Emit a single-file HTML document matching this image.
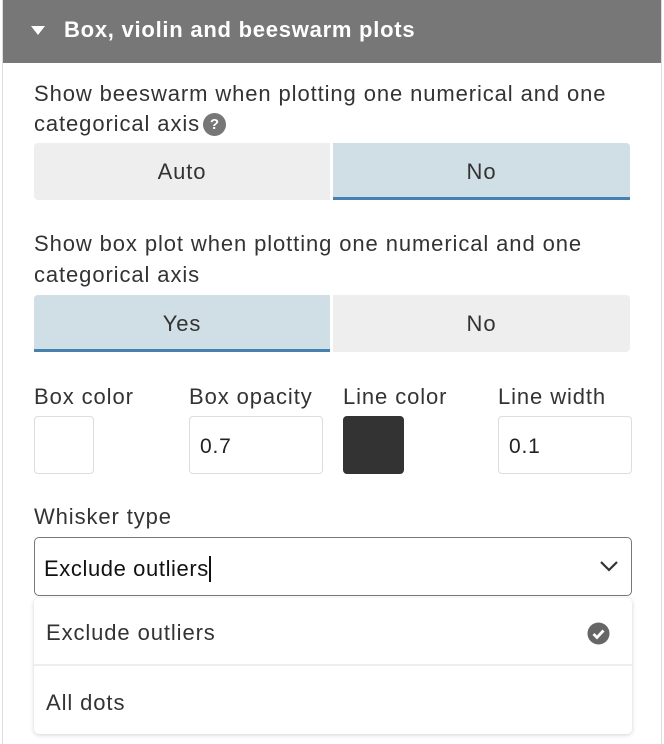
<!DOCTYPE html>
<html><head><style>
*{margin:0;padding:0;box-sizing:border-box}
body{width:664px;height:744px;background:#fff;font-family:"Liberation Sans",sans-serif;color:#333;position:relative;overflow:hidden}
.a{position:absolute;white-space:nowrap}
.t{font-size:22px;letter-spacing:0.9px}
.seg{position:absolute;height:57px;display:flex;align-items:center;justify-content:center;font-size:22px;letter-spacing:0.9px;color:#333}
.off{background:#eeeeee}
.on{background:#d0dee5;border-bottom:3px solid #4682ad;padding-top:3px}
.box{position:absolute;top:416px;height:58px;border:1px solid #ddd;border-radius:4px;background:#fff;font-size:21px;letter-spacing:0.8px;color:#222;padding-left:10px;padding-top:4px;display:flex;align-items:center}
</style></head><body>
<div class="a" style="left:2px;top:0;width:1px;height:744px;background:#ddd"></div>
<div class="a" style="left:661px;top:0;width:1px;height:744px;background:#ddd"></div>
<div class="a" style="left:3px;top:0;width:658px;height:63px;background:#777"></div>
<svg class="a" style="left:31px;top:26px" width="14" height="10"><path d="M0 0 L14 0 L7 9 Z" fill="#fff"/></svg>
<div class="a" style="left:64px;top:17px;font-size:22px;font-weight:bold;color:#fff;letter-spacing:0.75px">Box, violin and beeswarm plots</div>

<div class="a t" style="left:34px;top:81px">Show beeswarm when plotting one numerical and one</div>
<div class="a t" style="left:34px;top:111px">categorical axis</div>
<div class="a" style="left:203px;top:113px;width:23px;height:23px;border-radius:50%;background:#777;color:#fff;font-size:15px;font-weight:bold;text-align:center;line-height:23px">?</div>
<div class="seg off" style="left:34px;top:143px;width:296px;border-radius:4px 0 0 4px">Auto</div>
<div class="seg on" style="left:333px;top:143px;width:297px;border-radius:0 4px 0 0">No</div>

<div class="a t" style="left:34px;top:231px">Show box plot when plotting one numerical and one</div>
<div class="a t" style="left:34px;top:262px">categorical axis</div>
<div class="seg on" style="left:34px;top:295px;width:296px;border-radius:4px 0 0 0">Yes</div>
<div class="seg off" style="left:333px;top:295px;width:297px;border-radius:0 4px 4px 0">No</div>

<div class="a t" style="left:34px;top:384px">Box color</div>
<div class="a t" style="left:189px;top:384px">Box opacity</div>
<div class="a t" style="left:343px;top:384px">Line color</div>
<div class="a t" style="left:498px;top:384px">Line width</div>
<div class="box" style="left:34px;width:60px"></div>
<div class="box" style="left:189px;width:134px">0.7</div>
<div class="box" style="left:343px;width:61px;background:#333;border-color:#333"></div>
<div class="box" style="left:498px;width:134px">0.1</div>

<div class="a t" style="left:34px;top:504px">Whisker type</div>
<div class="a" style="left:34px;top:537px;width:598px;height:59px;border:1.5px solid #777;border-radius:5px"></div>
<div class="a" style="left:44px;top:556px;font-size:22px;color:#111;letter-spacing:0.6px">Exclude outliers<span style="display:inline-block;width:2px;height:26px;background:#111;vertical-align:-6px"></span></div>
<svg class="a" style="left:599px;top:560px" width="20" height="14"><path d="M2 2 L10 10 L18 2" fill="none" stroke="#333" stroke-width="2.2"/></svg>

<div class="a" style="left:34px;top:598px;width:598px;height:136px;background:#fff;border-radius:5px;box-shadow:0 1px 5px rgba(0,0,0,0.18)"></div>
<div class="a" style="left:34px;top:664px;width:598px;height:2px;background:#eee"></div>
<div class="a t" style="left:46px;top:620px;color:#333">Exclude outliers</div>
<div class="a t" style="left:46px;top:690px;color:#333">All dots</div>
<svg class="a" style="left:587px;top:622px" width="23" height="23"><circle cx="11.5" cy="11.5" r="11" fill="#666"/><path d="M6.5 12 L10 15.5 L16.5 8.5" fill="none" stroke="#fff" stroke-width="2.8"/></svg>
</body></html>
